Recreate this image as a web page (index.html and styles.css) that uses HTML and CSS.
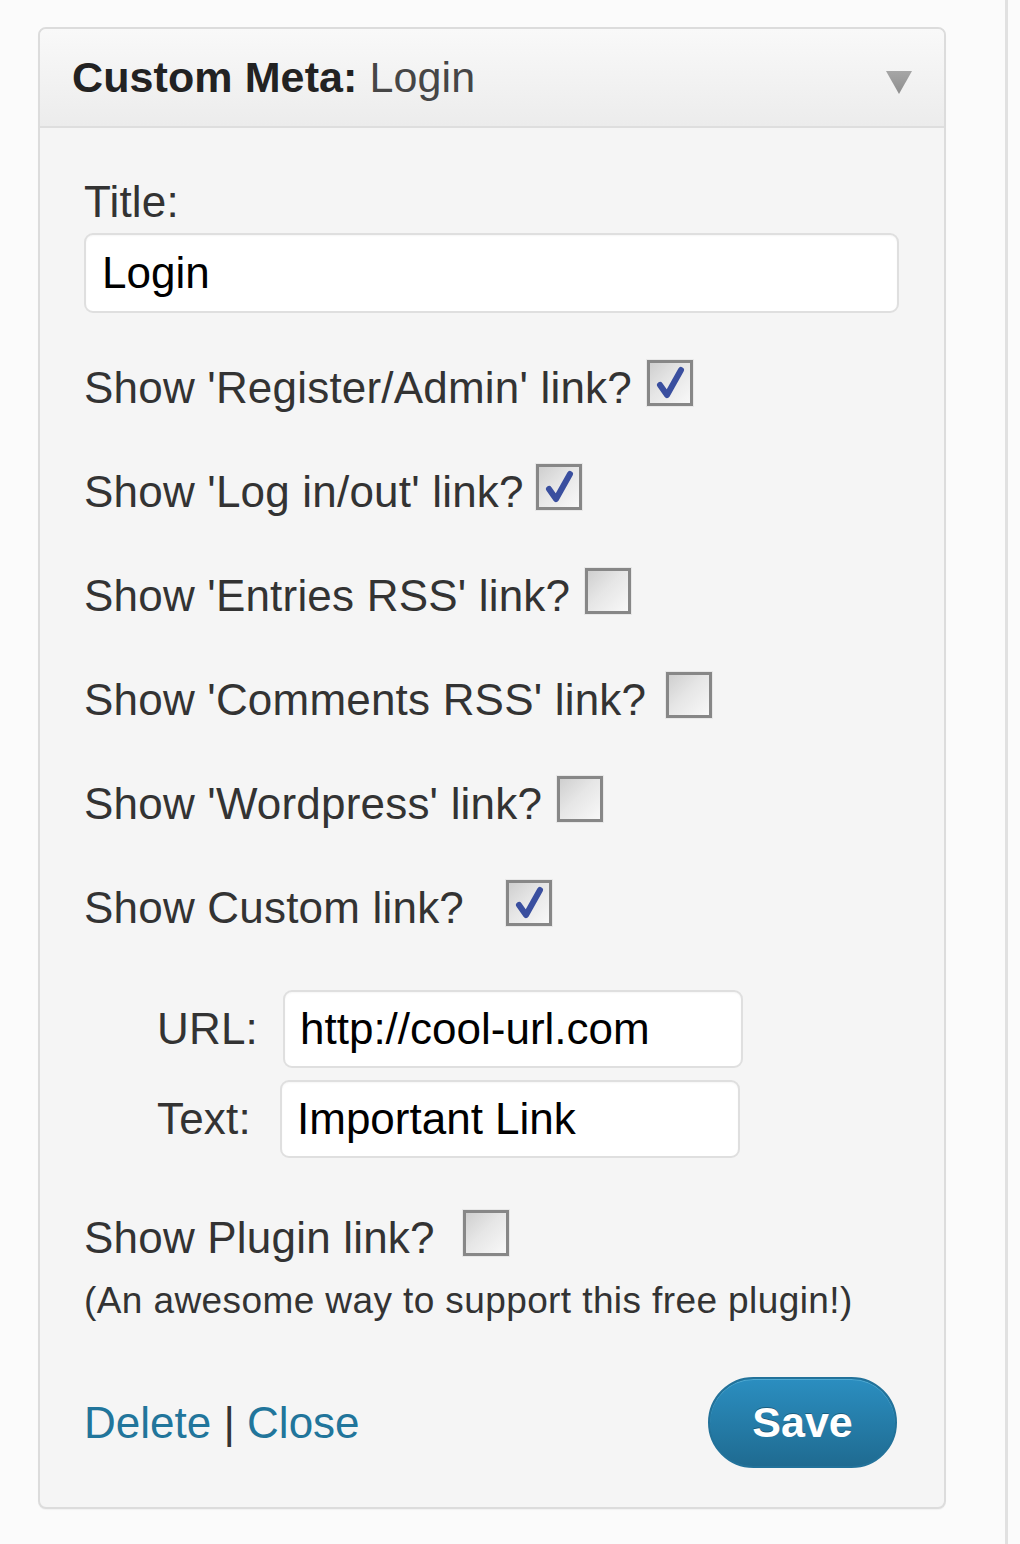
FILE: index.html
```html
<!DOCTYPE html>
<html>
<head>
<meta charset="utf-8">
<link rel="stylesheet" href="styles.css">
</head>
<body>
<div class="page">
  <div class="widget">
    <div class="widget-top">
      <h4 class="widget-title">Custom Meta:<span class="in-title"> Login</span></h4>
      <span class="arrow"><svg width="26" height="23" viewBox="0 0 26 23"><defs><linearGradient id="ag" x1="0" y1="0" x2="0" y2="1"><stop offset="0" stop-color="#a6a6a6"/><stop offset="1" stop-color="#8e8e8e"/></linearGradient></defs><polygon points="0,0 26,0 13,23" fill="url(#ag)"/></svg></span>
    </div>
    <div class="widget-inside">
      <div class="lbl title-lbl">Title:</div>
      <input class="inp inp-title" type="text" value="Login">

      <div class="row row-first"><span class="lbl">Show 'Register/Admin' link?</span><span class="cb on"><svg viewBox="0 0 40 40" width="40" height="40"><path d="M10 22 L17 32 L31 7" /></svg></span></div>
      <div class="row"><span class="lbl">Show 'Log in/out' link?</span><span class="cb on cb-tight"><svg viewBox="0 0 40 40" width="40" height="40"><path d="M10 22 L17 32 L31 7" /></svg></span></div>
      <div class="row"><span class="lbl">Show 'Entries RSS' link?</span><span class="cb"></span></div>
      <div class="row"><span class="lbl">Show 'Comments RSS' link?</span><span class="cb cb-wide"></span></div>
      <div class="row"><span class="lbl">Show 'Wordpress' link?</span><span class="cb"></span></div>
      <div class="row"><span class="lbl">Show Custom link?</span><span class="cb on cb-far"><svg viewBox="0 0 40 40" width="40" height="40"><path d="M10 22 L17 32 L31 7" /></svg></span></div>

      <div class="custom">
        <span class="lbl clbl">URL:</span><input class="inp inp-small" type="text" value="http://cool-url.com">
        <span class="lbl clbl">Text:</span><input class="inp inp-small inp-shift" type="text" value="Important Link">
      </div>

      <div class="row row-plugin"><span class="lbl">Show Plugin link?</span><span class="cb cb-mid"></span></div>
      <div class="note">(An awesome way to support this free plugin!)</div>

      <div class="actions">
        <div class="links"><a class="lnk" href="#">Delete</a> <span class="sep">|</span> <a class="lnk" href="#">Close</a></div>
        <button class="save" type="button">Save</button>
      </div>
    </div>
  </div>
</div>
</body>
</html>
```
FILE: styles.css
```css
html, body {
  margin: 0;
  padding: 0;
  background: #fbfbfb;
}
body {
  font-family: "Liberation Sans", Arial, sans-serif;
  color: #333;
}
.page {
  box-sizing: border-box;
  width: 1008px;
  min-height: 1544px;
  padding: 27px 0 0 38px;
  border-right: 3px solid #e1e1e1;
}
.widget {
  width: 908px;
  box-sizing: border-box;
  border: 2px solid #dcdcdc;
  border-radius: 8px;
  background: #f5f5f5;
  box-shadow: 0 1px 1px rgba(0,0,0,0.04);
}
.widget-top {
  height: 97px;
  display: flex;
  align-items: center;
  justify-content: space-between;
  padding: 0 32px;
  border-bottom: 2px solid #dedede;
  border-radius: 6px 6px 0 0;
  background: linear-gradient(#f9f9f9, #ececec);
}
.widget-title {
  margin: 0;
  font-size: 43px;
  font-weight: bold;
  color: #222;
  line-height: 97px;
  letter-spacing: 0.1px;
}
.in-title {
  font-weight: normal;
  color: #464646;
}
.arrow {
  display: flex;
  margin-top: 10px;
  margin-right: 0;
}
.widget-inside {
  padding: 49px 45px 39px 44px;
}
.lbl {
  font-size: 44px;
  line-height: 50px;
  letter-spacing: 0.2px;
  color: #333;
}
.title-lbl {
  display: block;
}
.inp {
  display: block;
  box-sizing: border-box;
  border: 2px solid #dfdfdf;
  border-radius: 9px;
  background: #fff;
  font-family: "Liberation Sans", Arial, sans-serif;
  font-size: 44px;
  color: #000;
  outline: none;
  margin: 0;
  box-shadow: inset 0 1px 2px rgba(0,0,0,0.04);
}
.inp-title {
  width: 100%;
  height: 80px;
  margin-top: 6px;
  padding: 0 16px;
}
.row {
  display: flex;
  align-items: center;
  height: 50px;
  margin-top: 54px;
}
.row-first {
  margin-top: 50px;
}
.cb {
  box-sizing: border-box;
  width: 46px;
  height: 46px;
  margin-left: 15px;
  margin-bottom: 10px;
  border: 3px solid #878787;
  background: linear-gradient(135deg, #cfcfcf 0%, #e6e6e6 45%, #f8f8f8 100%);
  box-shadow: 0 0 0 1px #e8e8e8;
  display: flex;
  align-items: center;
  justify-content: center;
}
.cb svg path {
  fill: none;
  stroke: #3a4f9f;
  stroke-width: 6;
  stroke-linecap: round;
  stroke-linejoin: round;
}
.cb-tight {
  margin-left: 12px;
}
.cb-wide {
  margin-left: 20px;
}
.cb-far {
  margin-left: 42px;
}
.cb-mid {
  margin-left: 28px;
}
.custom {
  display: grid;
  grid-template-columns: 126px 460px;
  grid-auto-rows: 78px;
  row-gap: 12px;
  align-items: center;
  margin-top: 57px;
  padding-left: 73px;
}
.clbl {
  display: block;
}
.inp-small {
  width: 460px;
  height: 78px;
  padding: 0 15px;
}
.inp-shift {
  margin-left: -3px;
}
.row-plugin {
  margin-top: 55px;
}
.note {
  margin-top: 16px;
  font-size: 37px;
  line-height: 44px;
  color: #333;
  letter-spacing: 0.4px;
}
.actions {
  margin-top: 54px;
  display: flex;
  align-items: center;
  justify-content: space-between;
  padding-right: 2px;
}
.links {
  font-size: 44px;
  line-height: 50px;
  color: #333;
}
.lnk {
  color: #21759b;
  text-decoration: none;
}
.sep {
  color: #333;
}
.save {
  width: 189px;
  height: 91px;
  border-radius: 46px;
  border: 2px solid #22729a;
  background: linear-gradient(#2b8ec0, #1f6b91);
  color: #fff;
  font-family: "Liberation Sans", Arial, sans-serif;
  font-size: 43px;
  font-weight: bold;
  text-shadow: 0 -1px 0 rgba(0,0,0,0.3);
  padding: 0;
  box-shadow: inset 0 1px 0 rgba(120,200,230,0.5);
}
```
